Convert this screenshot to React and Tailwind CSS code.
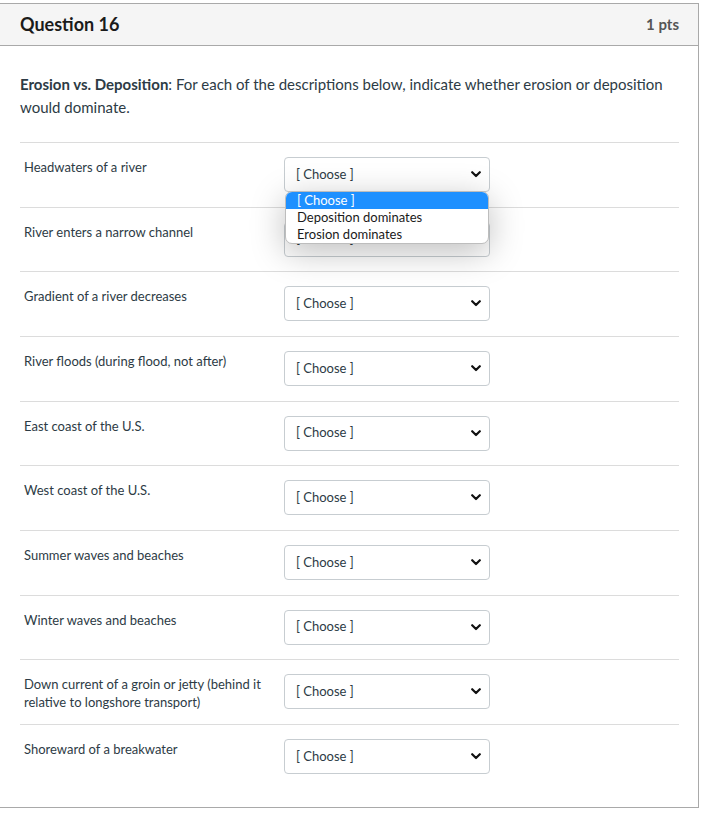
import { useState } from 'react';

const rows = [
    'Headwaters of a river',
    'River enters a narrow channel',
    'Gradient of a river decreases',
    'River floods (during flood, not after)',
    'East coast of the U.S.',
    'West coast of the U.S.',
    'Summer waves and beaches',
    'Winter waves and beaches',
    'Down current of a groin or jetty (behind it relative to longshore transport)',
    'Shoreward of a breakwater',
];

const options = ['[ Choose ]', 'Deposition dominates', 'Erosion dominates'];

function Chevron() {
    return (
        <svg width="10" height="7" viewBox="0 0 10 7" className="shrink-0">
            <path d="M1.2 1.2 L5 5 L8.8 1.2" fill="none" stroke="#111" strokeWidth="2.2" strokeLinecap="round" strokeLinejoin="round" />
        </svg>
    );
}

function FakeSelect({ open }) {
    return (
        <div className="relative w-[206px]">
            <div className="flex h-[35px] items-center justify-between rounded-[4px] border border-[#c7cdd1] bg-white pl-[11px] pr-[8px] text-[13px] text-[#2d3b45]">
                <span>[ Choose ]</span>
                <Chevron />
            </div>
            {open && (
                <div className="absolute left-px top-[34px] z-10 w-[204px] overflow-hidden rounded-[7px] border border-[#bdbdbd] bg-white shadow-[0_8px_34px_rgba(0,0,0,0.26)]">
                    {options.map((o, i) => (
                        <div
                            key={o}
                            className={
                                i === 0
                                    ? 'h-[17px] bg-[#1e90ff] pl-[11px] text-[13px] leading-[17px] text-white'
                                    : 'h-[17px] pl-[11px] text-[13px] leading-[17px] text-[#1a1a1a]'
                            }
                        >
                            {o}
                        </div>
                    ))}
                </div>
            )}
        </div>
    );
}

export default function App() {
    const [openRow] = useState(0);

    return (
        <div className="min-h-[814px] bg-white pt-[3px] font-['Lato','Noto_Sans',sans-serif] text-[#2d3b45]">
            <div className="-ml-px w-[700px] border border-[#a9a9a9]">
                <div className="flex h-[42px] items-center justify-between border-b border-[#a9a9a9] bg-[#f5f5f5] pl-[20px] pr-[19px]">
                    <h2 className="text-[18px] font-bold text-[#1b1b1b]">Question 16</h2>
                    <span className="text-[15px] font-bold text-[#555]">1 pts</span>
                </div>

                <div className="pb-[18px] pl-[20px] pr-[19px] pt-[27px]">
                    <p className="text-[15px] leading-[23px] text-[#2d3b45]">
                        <strong>Erosion vs. Deposition</strong>: For each of the descriptions below, indicate whether erosion or deposition would dominate.
                    </p>

                    <div className="mt-[23px]">
                        {rows.map((label, i) => (
                            <div key={label} className="flex h-[64.67px] border-t border-[#dcdcdc]">
                                <div className="w-[264px] pl-[4px] pt-[15px] text-[13px] leading-[18px] text-[#2d3b45]">
                                    <div className="w-[245px]">{label}</div>
                                </div>
                                <div className="pt-[14px]">
                                    <FakeSelect open={openRow === i} />
                                </div>
                            </div>
                        ))}
                    </div>
                </div>
            </div>
        </div>
    );
}
